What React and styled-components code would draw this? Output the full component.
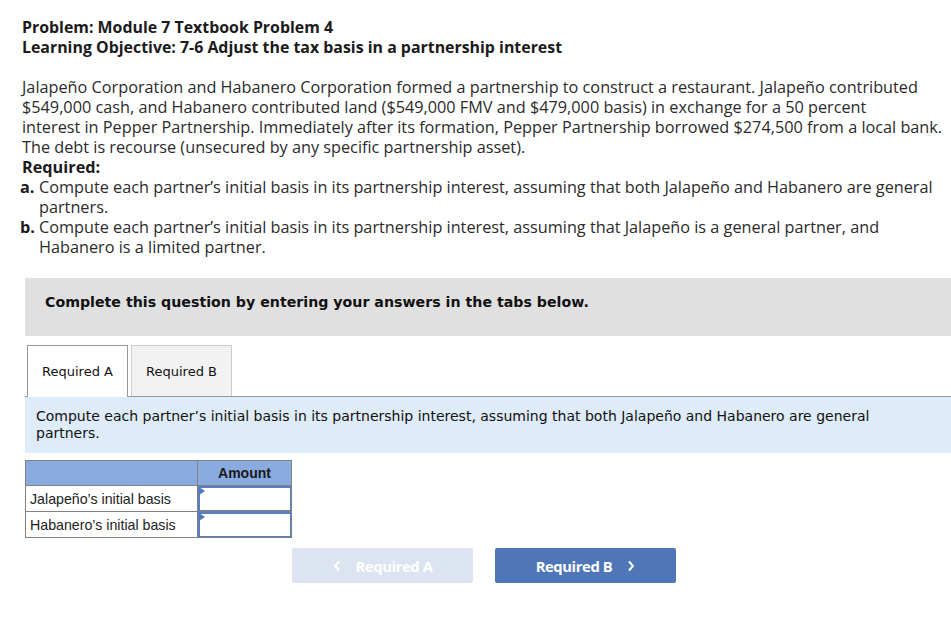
import styled, { createGlobalStyle } from "styled-components";

const GlobalStyle = createGlobalStyle`
  html, body {
    margin: 0;
    padding: 0;
    background: #ffffff;
  }
  body {
    overflow: hidden;
  }
`;

const Page = styled.div`
  width: 1000px;
  padding: 17px 0 0 22px;
  box-sizing: border-box;
  font-family: "Open Sans", "Liberation Sans", sans-serif;
  color: #2b2b2b;
`;

const Heading = styled.div`
  font-weight: 700;
  font-size: 15.9px;
  line-height: 20px;
  color: #1b1b1b;
`;

const Body = styled.div`
  margin-top: 20px;
  font-size: 16.25px;
  line-height: 20px;
`;

const Para = styled.p`
  margin: 0;
`;

const Line = styled.span`
  display: block;
  white-space: nowrap;
`;

const ReqTitle = styled.div`
  font-weight: 700;
  color: #1b1b1b;
`;

const ReqList = styled.ol`
  margin: 0;
  padding: 0;
  list-style: none;
`;

const ReqItem = styled.li`
  display: flex;
  margin-left: -2px;
`;

const ReqLetter = styled.span`
  font-weight: 700;
  color: #1b1b1b;
  width: 19px;
  flex: none;
`;

const Panel = styled.div`
  margin: 21px 0 0 3px;
  width: 975px;
`;

const Banner = styled.div`
  background: #e0e0e0;
  height: 58px;
  box-sizing: border-box;
  padding: 15px 0 0 20px;
  font-family: "DejaVu Sans", Verdana, sans-serif;
  font-weight: 700;
  font-size: 14.2px;
  line-height: 18px;
  color: #111111;
`;

const Tabs = styled.div`
  margin-top: 9px;
  display: flex;
  gap: 3px;
  padding-left: 2px;
  border-bottom: 1px solid #999999;
`;

const Tab = styled.div`
  width: 101px;
  box-sizing: border-box;
  display: flex;
  align-items: center;
  justify-content: center;
  font-family: "DejaVu Sans", Verdana, sans-serif;
  font-size: 13px;
  color: #111111;
  background: ${(p) => (p.$active ? "#ffffff" : "#f2f2f2")};
  border: 1px solid ${(p) => (p.$active ? "#999999" : "#cccccc")};
  border-bottom: none;
  margin-bottom: ${(p) => (p.$active ? "-1px" : "0")};
  height: ${(p) => (p.$active ? "52px" : "51px")};
`;

const Instruction = styled.div`
  background: #deebf8;
  padding: 11px 11px 0 11px;
  height: 56px;
  box-sizing: border-box;
  font-family: "DejaVu Sans", Verdana, sans-serif;
  font-size: 14px;
  line-height: 17px;
  color: #111111;
`;

const InstructionText = styled.div`
  width: 870px;
`;

const Table = styled.table`
  margin-top: 7px;
  border-collapse: collapse;
  font-family: "Liberation Sans", Arial, sans-serif;
  font-size: 14.2px;
  color: #222222;
`;

const HeadCell = styled.th`
  background: #8aabe0;
  border: 1px solid #808080;
  height: 25px;
  padding: 0;
  font-weight: 700;
  font-size: 14px;
  color: #1a1a1a;
  width: ${(p) => p.$w}px;
  text-align: center;
  vertical-align: top;
  padding-top: 4px;
  box-sizing: border-box;
`;

const LabelCell = styled.td`
  border: 1px solid #808080;
  height: 26px;
  padding: 0 4px;
  box-sizing: border-box;
`;

const InputCell = styled.td`
  border: 1px solid #808080;
  padding: 0;
  position: relative;
`;

const AmountInput = styled.input`
  display: block;
  width: 93px;
  height: 25px;
  box-sizing: border-box;
  border: 2px solid #5a7fc0;
  border-right-width: 1px;
  border-bottom-width: 1px;
  outline: none;
  background: #ffffff;
  font-family: "Liberation Sans", Arial, sans-serif;
  font-size: 13px;
`;

const Flag = styled.span`
  position: absolute;
  left: 1px;
  top: 1px;
  width: 0;
  height: 0;
  border-top: 4px solid transparent;
  border-bottom: 4px solid transparent;
  border-left: 6px solid #4f79c2;
`;

const Nav = styled.div`
  margin: 10px 0 0 267px;
  display: flex;
  gap: 22px;
`;

const NavButton = styled.button`
  width: 181px;
  height: 35px;
  border: none;
  border-radius: 2px;
  background: ${(p) => (p.$disabled ? "#dbe4f0" : "#4e76b8")};
  color: #ffffff;
  font-family: "Open Sans", "Liberation Sans", sans-serif;
  font-weight: 700;
  font-size: 14.8px;
  letter-spacing: -0.4px;
  display: flex;
  align-items: center;
  justify-content: center;
  gap: 15px;
  cursor: ${(p) => (p.$disabled ? "default" : "pointer")};
  padding: 0;
`;

function Chevron({ dir }) {
  return (
    <svg width="8" height="12" viewBox="0 0 8 12">
      <path
        d={dir === "left" ? "M6 1.5 L2 6 L6 10.5" : "M2 1.5 L6 6 L2 10.5"}
        fill="none"
        stroke="#ffffff"
        strokeWidth="2"
      />
    </svg>
  );
}

export default function App() {
  const rows = ["Jalapeño’s initial basis", "Habanero’s initial basis"];
  return (
    <Page>
      <GlobalStyle />
      <Heading>
        Problem: Module 7 Textbook Problem 4
        <br />
        Learning Objective: 7-6 Adjust the tax basis in a partnership interest
      </Heading>
      <Body>
        <Para>
          <Line>
            Jalapeño Corporation and Habanero Corporation formed a partnership to
            construct a restaurant. Jalapeño contributed
          </Line>
          <Line>
            $549,000 cash, and Habanero contributed land ($549,000 FMV and
            $479,000 basis) in exchange for a 50 percent
          </Line>
          <Line>
            interest in Pepper Partnership. Immediately after its formation,
            Pepper Partnership borrowed $274,500 from a local bank.
          </Line>
          <Line>The debt is recourse (unsecured by any specific partnership asset).</Line>
        </Para>
        <ReqTitle>Required:</ReqTitle>
        <ReqList>
          <ReqItem>
            <ReqLetter>a.</ReqLetter>
            <span>
              <Line>
                Compute each partner’s initial basis in its partnership interest,
                assuming that both Jalapeño and Habanero are general
              </Line>
              <Line>partners.</Line>
            </span>
          </ReqItem>
          <ReqItem>
            <ReqLetter>b.</ReqLetter>
            <span>
              <Line>
                Compute each partner’s initial basis in its partnership interest,
                assuming that Jalapeño is a general partner, and
              </Line>
              <Line>Habanero is a limited partner.</Line>
            </span>
          </ReqItem>
        </ReqList>
      </Body>

      <Panel>
        <Banner>Complete this question by entering your answers in the tabs below.</Banner>
        <Tabs>
          <Tab $active>Required A</Tab>
          <Tab>Required B</Tab>
        </Tabs>
        <Instruction>
          <InstructionText>
            Compute each partner’s initial basis in its partnership interest,
            assuming that both Jalapeño and Habanero are general partners.
          </InstructionText>
        </Instruction>

        <Table>
          <thead>
            <tr>
              <HeadCell $w={172} />
              <HeadCell $w={94}>Amount</HeadCell>
            </tr>
          </thead>
          <tbody>
            {rows.map((r) => (
              <tr key={r}>
                <LabelCell>{r}</LabelCell>
                <InputCell>
                  <AmountInput type="text" />
                  <Flag />
                </InputCell>
              </tr>
            ))}
          </tbody>
        </Table>

        <Nav>
          <NavButton $disabled>
            <Chevron dir="left" />
            Required A
          </NavButton>
          <NavButton>
            Required B
            <Chevron dir="right" />
          </NavButton>
        </Nav>
      </Panel>
    </Page>
  );
}
